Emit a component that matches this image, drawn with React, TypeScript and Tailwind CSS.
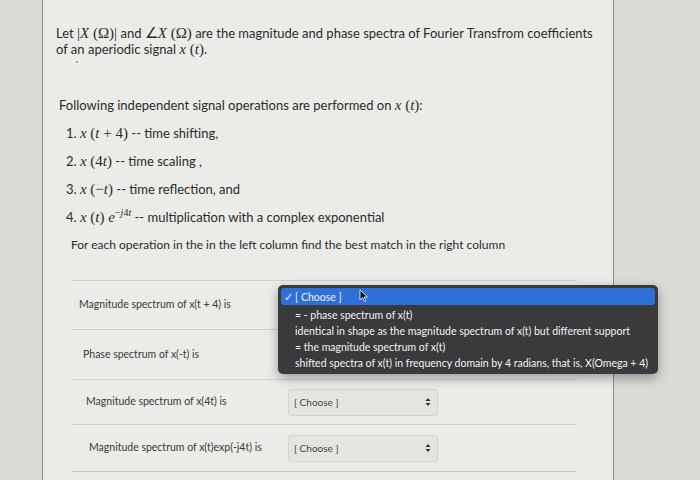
import { ReactNode } from 'react';

function M({ children }: { children: ReactNode }) {
  return <span className="font-['Liberation_Serif',serif] text-[15px]">{children}</span>;
}

function I({ children }: { children: ReactNode }) {
  return <span className="italic">{children}</span>;
}

const options = [
  '= - phase spectrum of x(t)',
  'identical in shape as the magnitude spectrum of x(t) but different support',
  '= the magnitude spectrum of x(t)',
  'shifted spectra of x(t) in frequency domain by 4 radians, that is, X(Omega + 4)',
];

const rows = [
  { label: 'Magnitude spectrum of x(t + 4) is', pad: 'pl-[8px]', h: 'h-[49px]' },
  { label: 'Phase spectrum of x(-t) is', pad: 'pl-[12px]', h: 'h-[50px]' },
  { label: 'Magnitude spectrum of x(4t) is', pad: 'pl-[15px]', h: 'h-[45px]' },
  { label: 'Magnitude spectrum of x(t)exp(-j4t) is', pad: 'pl-[18px]', h: 'h-[47px]' },
];

function SelectBox() {
  return (
    <div className="w-[150px] h-[27px] rounded-[3px] border border-[#d2d2ce] bg-[#e4e4e0] flex items-center justify-between px-[5px] text-[10px] text-[#444]">
      <span>[ Choose ]</span>
      <svg width="6" height="10" viewBox="0 0 6 10" className="mr-[1px]">
        <path d="M3 1 L5.5 4 H0.5 Z" fill="#333" />
        <path d="M3 9 L5.5 6 H0.5 Z" fill="#333" />
      </svg>
    </div>
  );
}

export default function App() {
  return (
    <div className="relative w-[700px] h-[480px] overflow-hidden bg-[#dbdbd6] font-['Lato','Noto_Sans',sans-serif] text-[#2b2b2b]">
      <div className="ml-[42px] w-[572px] h-[480px] border-x border-[#8e8e8a] bg-[#ebebe7] pt-[25px]">
        <div className="pl-[13px] pr-[4px] text-[13px] leading-[16px]">
          <p>
            Let <M>|<I>X</I> (Ω)|</M> and <M>∠<I>X</I> (Ω)</M> are the magnitude and phase spectra of Fourier Transfrom coefficients
            <br />
            of an aperiodic signal <M><I>x</I> (<I>t</I>)</M>.
          </p>
          <div className="ml-[20px] mt-[4px] w-[2px] h-[2px] rounded-full bg-[#999]" />
          <p className="mt-[34px] pl-[3px]">
            Following independent signal operations are performed on <M><I>x</I> (<I>t</I>)</M>:
          </p>
          <div className="pl-[10px] mt-[12px] flex flex-col gap-[12px] text-[13px]">
            <p>1. <M><I>x</I> (<I>t</I> + 4)</M> -- time shifting,</p>
            <p>2. <M><I>x</I> (4<I>t</I>)</M> -- time scaling ,</p>
            <p>3. <M><I>x</I> (−<I>t</I>)</M> -- time reflection, and</p>
            <p>
              4. <M><I>x</I> (<I>t</I>) <I>e</I><sup className="text-[10px] -top-[6px]">−<I>j</I>4<I>t</I></sup></M> -- multiplication with a complex exponential
            </p>
          </div>
          <p className="pl-[15px] mt-[12px] text-[12px]">
            For each operation in the in the left column find the best match in the right column
          </p>
        </div>

        <div className="mt-[27px] ml-[28px] mr-[36px] border-b border-[#c8c8c4]">
          {rows.map((row) => (
            <div
              key={row.label}
              className={`${row.h} border-t border-[#cfcfcb] flex items-center text-[10.5px] text-[#3a3a3a]`}
            >
              <span className={`w-[217px] shrink-0 ${row.pad}`}>{row.label}</span>
              <SelectBox />
            </div>
          ))}
        </div>
      </div>

      <div className="absolute left-[278px] top-[285px] w-[380px] rounded-[5px] bg-[#3a3a3c] p-[3px] shadow-[0_4px_12px_rgba(0,0,0,0.35)] text-[10.5px] leading-[16px] text-[#f2f2f2] whitespace-nowrap">
        <div className="relative h-[17px] rounded-[3px] bg-[#2f6fd8] flex items-center px-[3px]">
          <span className="w-[11px]">✓</span>
          <span>[ Choose ]</span>
          <svg className="absolute left-[78px] top-[1px]" width="10" height="14" viewBox="0 0 10 14">
            <path d="M1 1 L1 11 L3.5 8.5 L5.5 12.5 L7 11.8 L5 8 L8.5 8 Z" fill="#111" stroke="#fff" strokeWidth="0.8" />
          </svg>
        </div>
        <div className="pt-[2px]">
          {options.map((o) => (
            <div key={o} className="h-[16px] pl-[14px]">
              {o}
            </div>
          ))}
        </div>
      </div>
    </div>
  );
}
